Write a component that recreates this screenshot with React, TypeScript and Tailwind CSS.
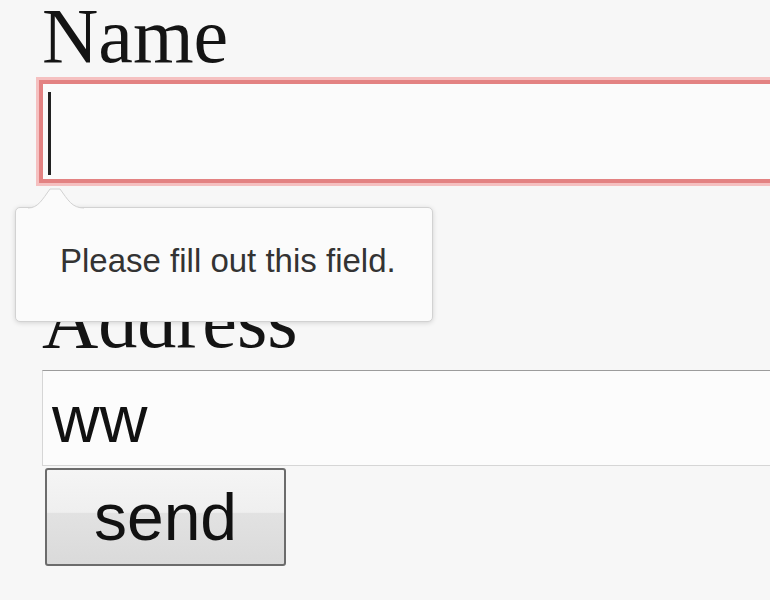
import React from "react";

export default function App() {
  return (
    <div className="relative w-[770px] h-[600px] overflow-hidden bg-[#f7f7f7]">
      <div className="pl-[42px] flex flex-col items-start">
        <div className="h-[72px] text-[78px] leading-[72px] text-[#141414] font-['Liberation_Serif',serif]">
          Name
        </div>
        <div className="ml-[-3px] mt-[8px] h-[103px] w-[780px] border-4 border-[#e38282] shadow-[0_0_0_3px_#f5c0c0] bg-[#fbfbfb] pl-[5px] pt-[8px]">
          <div className="w-[3px] h-[83px] bg-[#222]" />
        </div>
        <div className="mt-[102px] h-[72px] text-[78px] leading-[72px] text-[#141414] font-['Liberation_Serif',serif]">
          Address
        </div>
        <div className="mt-[13px] h-[96px] w-[780px] border border-[#d6d6d6] border-t-[#9c9c9c] bg-[#fcfcfc] pl-[9px] pt-[15px]">
          <div className="text-[66px] leading-[66px] text-[#111] font-['Liberation_Sans',sans-serif]">ww</div>
        </div>
        <button className="ml-[3px] mt-[2px] w-[241px] h-[98px] border-2 border-[#6c6c6c] rounded-[3px] bg-[linear-gradient(to_bottom,#f5f5f5_0%,#efefef_45%,#e2e2e2_46%,#dadada_100%)] flex items-center justify-center text-[66px] leading-[66px] text-[#111] font-['Liberation_Sans',sans-serif]">
          send
        </button>
      </div>

      <div className="absolute left-[15px] top-[207px] w-[418px] h-[115px] bg-[#fbfbfb] border border-[#d2d2d2] rounded-[5px] shadow-[0_1px_5px_rgba(0,0,0,0.15)] pl-[44px] pt-[36px]">
        <div className="text-[33px] leading-[33px] text-[#333] font-['Liberation_Sans',sans-serif] whitespace-nowrap">
          Please fill out this field.
        </div>
      </div>
      <svg className="absolute left-[28px] top-[186px]" width="58" height="23" viewBox="0 0 58 23">
        <path d="M0 22 C10 22 14 14 22 3 L32 3 C40 14 44 22 56 22 L56 23 L0 23 Z" fill="#fbfbfb" />
        <path d="M0 22 C10 22 14 14 22 3 L32 3 C40 14 44 22 56 22" fill="none" stroke="#d2d2d2" strokeWidth="1" />
      </svg>
    </div>
  );
}
